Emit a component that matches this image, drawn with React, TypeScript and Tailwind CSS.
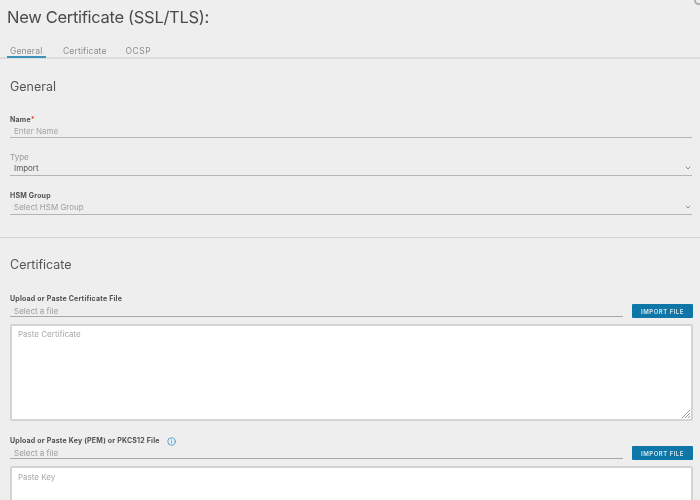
import { ChevronDown, Info } from "lucide-react";

const font = "font-['Inter',_sans-serif]";

const Label = ({ children }: { children: React.ReactNode }) => (
  <div className="h-[12px] text-[7px] leading-[12px] font-bold tracking-[0.2px] text-[#505050]">{children}</div>
);

const SelectField = ({ value, muted }: { value: string; muted?: boolean }) => (
  <div className="mt-[-1px] flex h-[14px] items-center justify-between border-b border-[#b5b5b5] pb-[1px] pl-[4px]">
    <span className={`text-[8px] ${muted ? "text-[#9c9c9c]" : "text-[#555555]"}`}>{value}</span>
    <ChevronDown className="h-[8px] w-[8px] text-[#8a8a8a]" strokeWidth={3} />
  </div>
);

const FileRow = () => (
  <div className="flex items-start gap-[9px]">
    <div className="flex h-[12px] flex-1 items-center border-b border-[#a8a8a8] pl-[4px] text-[8px] text-[#9c9c9c]">
      Select a file
    </div>
    <button className="my-[-1px] h-[14px] w-[61px] rounded-[1px] bg-[#0f76a8] text-[6px] font-semibold tracking-[0.5px] text-[#d8e8f0]">
      IMPORT FILE
    </button>
  </div>
);

export default function App() {
  return (
    <div className={`h-[500px] w-[700px] overflow-hidden bg-[#eeeeee] blur-[0.6px] ${font}`}>
      <h1 className="h-[43px] pl-[7px] pt-[5px] text-[16.5px] leading-[24px] tracking-[-0.3px] text-[#4a4a4a]">New Certificate (SSL/TLS):</h1>
      <div className="flex h-[16px] items-start gap-[19px] border-b-2 border-[#dcdcdc] pl-[7px] pt-[2px] text-[8.5px] leading-[13px] tracking-[0.15px] text-[#8e8e8e]">
        <span className="h-[13px] w-[39px] border-b-2 border-[#3d93b8] pl-[3px]">General</span>
        <span className="ml-[-2px]">Certificate</span>
        <span className="tracking-[0.5px]">OCSP</span>
      </div>

      <section className="pl-[10px] pr-[8px]">
        <h2 className="pt-[19px] text-[12.5px] leading-[18px] text-[#555555]">General</h2>
        <div className="mt-[18px]">
          <Label>
            Name<span className="text-[#d9493d]">*</span>
          </Label>
          <div className="flex h-[12px] items-center border-b border-[#b5b5b5] pb-[1px] pl-[4px] text-[8px] text-[#a3a3a3]">Enter Name</div>
        </div>
        <div className="mt-[13px] h-[12px] text-[8px] leading-[12px] text-[#9a9a9a]">Type</div>
        <SelectField value="Import" />
        <div className="mt-[14px]">
          <Label>HSM Group</Label>
          <SelectField value="Select HSM Group" muted />
        </div>
      </section>

      <div className="mt-[22px] h-px bg-[#d4d4d4]" />

      <section className="pl-[10px] pr-[7px]">
        <h2 className="pt-[18px] text-[12.5px] leading-[18px] text-[#555555]">Certificate</h2>
        <div className="mt-[19px]">
          <Label>Upload or Paste Certificate File</Label>
          <FileRow />
          <div className="relative mt-[7px] h-[97px] rounded-[2px] border-2 border-[#d4d4d4] bg-white px-[6px] pt-[2px] text-[8px] text-[#a8a8a8]">
            Paste Certificate
            <svg className="absolute bottom-0 right-0 h-[10px] w-[10px]" viewBox="0 0 10 10" stroke="#9a9a9a" strokeWidth="1">
              <path d="M1 9 9 1M4 9 9 4M7 9 9 7" />
            </svg>
          </div>
        </div>
        <div className="mt-[14px]">
          <Label>
            <span className="flex items-center gap-[7px]">
              Upload or Paste Key (PEM) or PKCS12 File
              <Info className="h-[9px] w-[9px] text-[#4b9fd0]" strokeWidth={2.5} />
            </span>
          </Label>
          <FileRow />
          <div className="mt-[7px] h-[60px] rounded-[2px] border-2 border-[#d4d4d4] bg-white px-[6px] pt-[3px] text-[8px] text-[#a8a8a8]">Paste Key</div>
        </div>
      </section>

      <div className="fixed right-[-3px] top-[-4px] h-[9px] w-[9px] rounded-full border-2 border-[#b0b0b0]" />
    </div>
  );
}
